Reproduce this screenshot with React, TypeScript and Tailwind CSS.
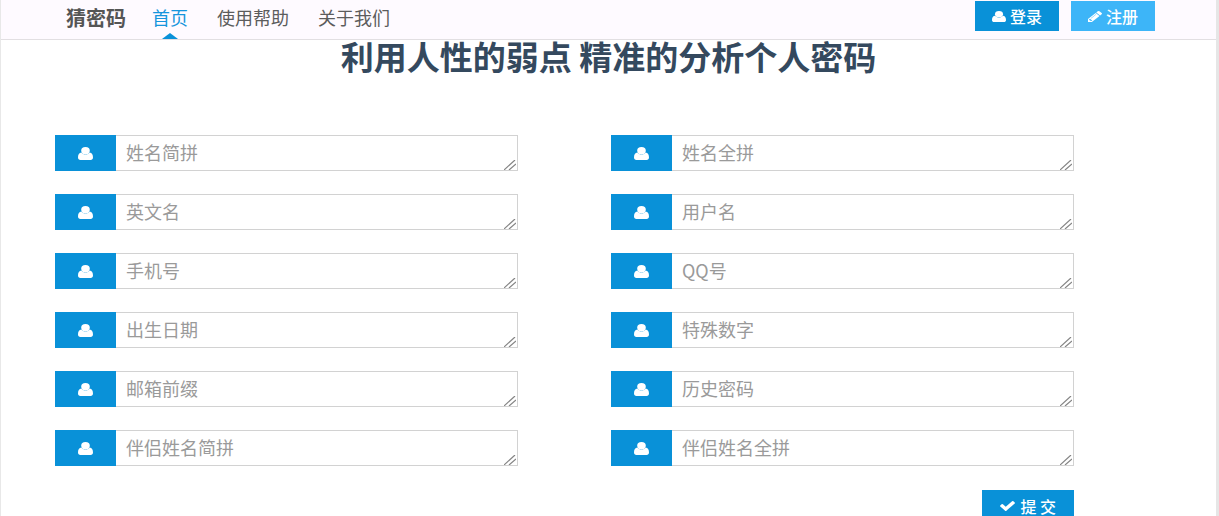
import React from "react";

const fields = [
  { id: "name-short", label: "姓名简拼" },
  { id: "name-full", label: "姓名全拼" },
  { id: "english-name", label: "英文名" },
  { id: "username", label: "用户名" },
  { id: "phone", label: "手机号" },
  { id: "qq", label: "QQ号" },
  { id: "birthday", label: "出生日期" },
  { id: "numbers", label: "特殊数字" },
  { id: "email-prefix", label: "邮箱前缀" },
  { id: "old-password", label: "历史密码" },
  { id: "partner-short", label: "伴侣姓名简拼" },
  { id: "partner-full", label: "伴侣姓名全拼" },
];

type IconProps = { className: string };

function UserIcon({ className }: IconProps) {
  return (
    <svg viewBox="0 0 15 13" preserveAspectRatio="none" fill="currentColor" aria-hidden="true" className={className}>
      <ellipse cx="7.5" cy="3.7" rx="4.3" ry="3.7" />
      <path d="M3.400 5.500C1.100 5.600 0 7.500 0 10.600C0 12.200 0.900 13 2.400 13H12.600C14.100 13 15 12.200 15 10.600C15 7.500 13.900 5.600 11.600 5.500C10.600 6.900 9.200 7.600 7.500 7.600C5.800 7.600 4.400 6.900 3.400 5.500Z" />
    </svg>
  );
}

function PencilIcon({ className }: IconProps) {
  return (
    <svg viewBox="128 147 1517 1517" preserveAspectRatio="none" fill="currentColor" aria-hidden="true" className={className}>
      <path d="M491 1536l91-91-235-235-91 91v107h128v128h107zm523-928q0-22-22-22-10 0-17 7l-542 542q-7 7-7 17 0 22 22 22 10 0 17-7l542-542q7-7 7-17zm-54-192l416 416-832 832h-416v-416zm683 96q0 53-37 90l-166 166-416-416 166-165q36-38 90-38 53 0 91 38l235 234q37 39 37 91z" />
    </svg>
  );
}

function CheckIcon({ className }: IconProps) {
  return (
    <svg viewBox="121 334 1550 1188" preserveAspectRatio="none" fill="currentColor" aria-hidden="true" className={className}>
      <path d="M1671 566q0 40-28 68l-724 724-136 136q-28 28-68 28t-68-28l-136-136-362-362q-28-28-28-68t28-68l136-136q28-28 68-28t68 28l294 295 656-657q28-28 68-28t68 28l136 136q28 28 28 68z" />
    </svg>
  );
}

function Field({ id, label }: { id: string; label: string }) {
  return (
    <div className="relative flex h-9">
      <label htmlFor={id} aria-label={label} className="flex w-[61px] shrink-0 items-center justify-center bg-[#0991d8] text-white">
        <UserIcon className="h-[13px] w-[15px]" />
      </label>
      <textarea
        id={id}
        rows={1}
        placeholder={label}
        className="block h-9 min-w-0 flex-1 resize-none overflow-hidden border border-l-0 border-[#d2d2d2] bg-white px-[10px] py-1 text-[18px] leading-6 text-[#555] outline-none placeholder:text-[#9a9a9a]"
      />
      <svg viewBox="0 0 12 10" stroke="#858585" strokeWidth="1.200" fill="none" aria-hidden="true" className="pointer-events-none absolute right-[2px] bottom-[1px] h-[10px] w-3">
        <path d="M0 10L11 0M5 10L12 4" />
      </svg>
    </div>
  );
}

export default function App() {
  return (
    <div className="min-h-screen border-r-[3px] border-l border-r-[#e6e6e6] border-l-[#e8e8e8] bg-white font-['Noto_Sans_CJK_SC','Noto_Sans',sans-serif]">
      <header className="flex h-10 items-stretch border-b border-[#e2dfe2] bg-[#fefaff] pr-[61px] pl-[65px]">
        <a href="#" className="mr-[26px] flex items-center pb-1 text-[20px] leading-6 font-bold text-[#555]">猜密码</a>
        <nav className="flex gap-[29px] text-[18px] leading-6 text-[#5c5c5c]">
          <a href="#" aria-current="page" className="relative flex h-full items-center pb-[5px] text-[#1595dc]">
            首页
            <svg viewBox="0 0 16 6" fill="#0991d8" aria-hidden="true" className="absolute bottom-0 left-1/2 h-[6px] w-4 -translate-x-1/2">
              <path d="M0 6L8 0L16 6Z" />
            </svg>
          </a>
          <a href="#" className="flex items-center pb-[5px]">使用帮助</a>
          <a href="#" className="flex items-center pb-[5px]">关于我们</a>
        </nav>
        <div className="ml-auto flex gap-3 pt-px text-[16px] leading-6 font-medium text-white">
          <button type="button" className="flex h-[30px] items-center gap-1 bg-[#0991d8] px-[17px]">
            <UserIcon className="h-[11px] w-[14px]" />
            登录
          </button>
          <button type="button" className="flex h-[30px] items-center gap-1 bg-[#3db5f8] px-[17px]">
            <PencilIcon className="h-[11px] w-[14px]" />
            注册
          </button>
        </div>
      </header>
      <main>
        <h1 className="text-center text-[33px] leading-8 font-bold text-[#34495e]">利用人性的弱点 精准的分析个人密码</h1>
        <form className="pt-[63px] pr-[142px] pl-[54px]">
          <div className="grid grid-cols-2 gap-x-[93px] gap-y-[23px]">
            {fields.map((field) => (
              <Field key={field.id} id={field.id} label={field.label} />
            ))}
          </div>
          <div className="mt-6 flex justify-end">
            <button type="submit" className="flex h-8 items-center gap-[5px] bg-[#0991d8] px-[18px] text-[16px] leading-6 font-medium text-white">
              <CheckIcon className="h-[10px] w-[15px]" />
              提 交
            </button>
          </div>
        </form>
      </main>
    </div>
  );
}
